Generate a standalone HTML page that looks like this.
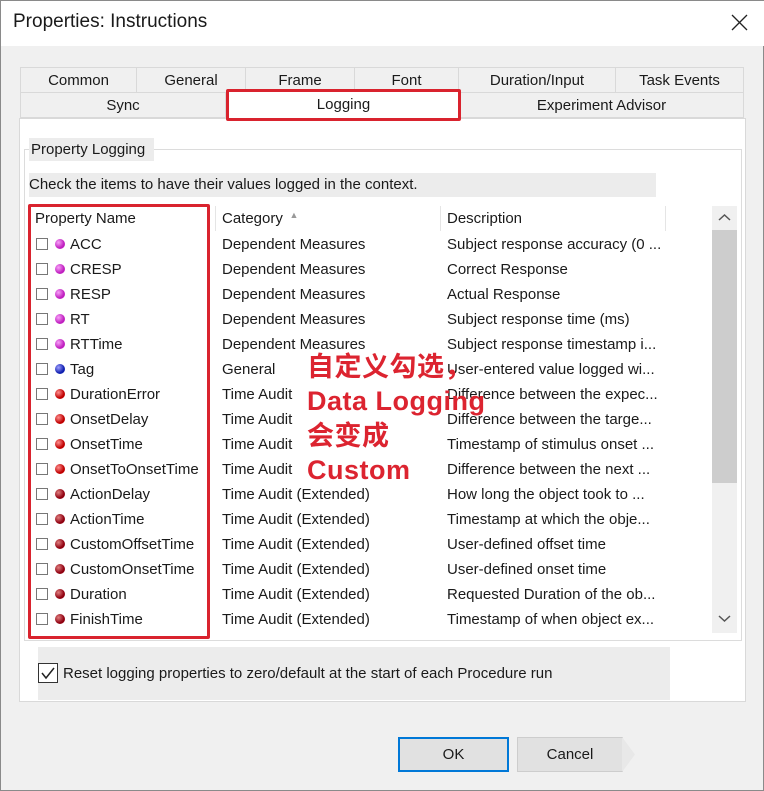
<!DOCTYPE html>
<html><head><meta charset="utf-8"><style>
*{margin:0;padding:0;box-sizing:border-box}
body{width:764px;height:791px;background:#f0f0f0;font-family:"Liberation Sans","Noto Sans CJK SC",sans-serif;font-size:15px;color:#1a1a1a;position:relative;overflow:hidden;border:1px solid #8a8a8a}
.a{position:absolute;white-space:nowrap}
.tab{position:absolute;background:#f0f0f0;border:1px solid #d9d9d9;text-align:center;line-height:25px;font-size:15px}
.row{position:absolute;left:29px;width:680px;height:25px;line-height:25px}
.cb{position:absolute;left:6px;top:6px;width:12px;height:12px;border:1px solid #777;background:#fff}
.dot{position:absolute;left:25px;top:7px;width:10px;height:10px;border-radius:50%}
.n{position:absolute;left:40px}
.c{position:absolute;left:192px}
.d{position:absolute;left:417px}
.red{position:absolute;left:306px;color:#dc2430;font-weight:bold;font-size:27px;font-family:"Liberation Sans","Noto Sans CJK SC",sans-serif;line-height:34px;letter-spacing:0.5px}
</style></head><body>
<div class="a" style="left:0;top:0;width:764px;height:45px;background:#fff"></div>
<div class="a" style="left:12px;top:10px;font-size:19px">Properties: Instructions</div>
<svg class="a" style="left:730px;top:13px" width="17" height="17"><path d="M1 1 L16 16 M16 1 L1 16" stroke="#222" stroke-width="1.3"/></svg>

<div class="tab" style="left:19px;top:66px;width:117px;height:26px">Common</div>
<div class="tab" style="left:135px;top:66px;width:110px;height:26px">General</div>
<div class="tab" style="left:244px;top:66px;width:110px;height:26px">Frame</div>
<div class="tab" style="left:353px;top:66px;width:105px;height:26px">Font</div>
<div class="tab" style="left:457px;top:66px;width:158px;height:26px">Duration/Input</div>
<div class="tab" style="left:614px;top:66px;width:129px;height:26px">Task Events</div>
<div class="tab" style="left:19px;top:91px;width:206px;height:26px">Sync</div>
<div class="tab" style="left:458px;top:91px;width:285px;height:26px">Experiment Advisor</div>

<div class="a" style="left:18px;top:117px;width:727px;height:584px;background:#fff;border:1px solid #d9d9d9"></div>
<div class="a" style="left:225px;top:88px;width:235px;height:32px;background:#fff;border:3px solid #d9232e;border-radius:2px;text-align:center;line-height:25px">Logging</div>

<div class="a" style="left:23px;top:148px;width:718px;height:492px;border:1px solid #dcdcdc"></div>
<div class="a" style="left:28px;top:137px;width:125px;height:23px;background:#ececec;padding-left:2px;line-height:23px">Property Logging</div>
<div class="a" style="left:28px;top:172px;width:627px;height:24px;background:#ececec;line-height:24px">Check the items to have their values logged in the context.</div>

<div class="a" style="left:214px;top:205px;width:1px;height:25px;background:#e5e5e5"></div>
<div class="a" style="left:439px;top:205px;width:1px;height:25px;background:#e5e5e5"></div>
<div class="a" style="left:664px;top:205px;width:1px;height:25px;background:#e5e5e5"></div>
<div class="a" style="left:34px;top:209px">Property Name</div>
<div class="a" style="left:221px;top:209px">Category <span style="font-size:9px;color:#999;vertical-align:5px">&nbsp;▲</span></div>
<div class="a" style="left:446px;top:209px">Description</div>

<div class="a" style="left:711px;top:205px;width:25px;height:427px;background:#f0f0f0"></div>
<div class="a" style="left:711px;top:229px;width:25px;height:253px;background:#cdcdcd"></div>
<svg class="a" style="left:717px;top:212px" width="13" height="9"><path d="M1 7 L6.5 2 L12 7" fill="none" stroke="#555" stroke-width="1.5"/></svg>
<svg class="a" style="left:717px;top:613px" width="13" height="9"><path d="M1 2 L6.5 7 L12 2" fill="none" stroke="#555" stroke-width="1.5"/></svg>

<div class="row" style="top:231px"><div class="cb"></div><div class="dot" style="background:radial-gradient(circle at 35% 35%,#f8a0f8,#c020c0 60%)"></div><div class="n">ACC</div><div class="c">Dependent Measures</div><div class="d">Subject response accuracy (0 ...</div></div>
<div class="row" style="top:256px"><div class="cb"></div><div class="dot" style="background:radial-gradient(circle at 35% 35%,#f8a0f8,#c020c0 60%)"></div><div class="n">CRESP</div><div class="c">Dependent Measures</div><div class="d">Correct Response</div></div>
<div class="row" style="top:281px"><div class="cb"></div><div class="dot" style="background:radial-gradient(circle at 35% 35%,#f8a0f8,#c020c0 60%)"></div><div class="n">RESP</div><div class="c">Dependent Measures</div><div class="d">Actual Response</div></div>
<div class="row" style="top:306px"><div class="cb"></div><div class="dot" style="background:radial-gradient(circle at 35% 35%,#f8a0f8,#c020c0 60%)"></div><div class="n">RT</div><div class="c">Dependent Measures</div><div class="d">Subject response time (ms)</div></div>
<div class="row" style="top:331px"><div class="cb"></div><div class="dot" style="background:radial-gradient(circle at 35% 35%,#f8a0f8,#c020c0 60%)"></div><div class="n">RTTime</div><div class="c">Dependent Measures</div><div class="d">Subject response timestamp i...</div></div>
<div class="row" style="top:356px"><div class="cb"></div><div class="dot" style="background:radial-gradient(circle at 35% 35%,#a0a0ff,#1020b0 60%)"></div><div class="n">Tag</div><div class="c">General</div><div class="d">User-entered value logged wi...</div></div>
<div class="row" style="top:381px"><div class="cb"></div><div class="dot" style="background:radial-gradient(circle at 35% 35%,#ff9090,#c00000 60%)"></div><div class="n">DurationError</div><div class="c">Time Audit</div><div class="d">Difference between the expec...</div></div>
<div class="row" style="top:406px"><div class="cb"></div><div class="dot" style="background:radial-gradient(circle at 35% 35%,#ff9090,#c00000 60%)"></div><div class="n">OnsetDelay</div><div class="c">Time Audit</div><div class="d">Difference between the targe...</div></div>
<div class="row" style="top:431px"><div class="cb"></div><div class="dot" style="background:radial-gradient(circle at 35% 35%,#ff9090,#c00000 60%)"></div><div class="n">OnsetTime</div><div class="c">Time Audit</div><div class="d">Timestamp of stimulus onset ...</div></div>
<div class="row" style="top:456px"><div class="cb"></div><div class="dot" style="background:radial-gradient(circle at 35% 35%,#ff9090,#c00000 60%)"></div><div class="n">OnsetToOnsetTime</div><div class="c">Time Audit</div><div class="d">Difference between the next ...</div></div>
<div class="row" style="top:481px"><div class="cb"></div><div class="dot" style="background:radial-gradient(circle at 35% 35%,#e08080,#900010 60%)"></div><div class="n">ActionDelay</div><div class="c">Time Audit (Extended)</div><div class="d">How long the object took to ...</div></div>
<div class="row" style="top:506px"><div class="cb"></div><div class="dot" style="background:radial-gradient(circle at 35% 35%,#e08080,#900010 60%)"></div><div class="n">ActionTime</div><div class="c">Time Audit (Extended)</div><div class="d">Timestamp at which the obje...</div></div>
<div class="row" style="top:531px"><div class="cb"></div><div class="dot" style="background:radial-gradient(circle at 35% 35%,#e08080,#900010 60%)"></div><div class="n">CustomOffsetTime</div><div class="c">Time Audit (Extended)</div><div class="d">User-defined offset time</div></div>
<div class="row" style="top:556px"><div class="cb"></div><div class="dot" style="background:radial-gradient(circle at 35% 35%,#e08080,#900010 60%)"></div><div class="n">CustomOnsetTime</div><div class="c">Time Audit (Extended)</div><div class="d">User-defined onset time</div></div>
<div class="row" style="top:581px"><div class="cb"></div><div class="dot" style="background:radial-gradient(circle at 35% 35%,#e08080,#900010 60%)"></div><div class="n">Duration</div><div class="c">Time Audit (Extended)</div><div class="d">Requested Duration of the ob...</div></div>
<div class="row" style="top:606px"><div class="cb"></div><div class="dot" style="background:radial-gradient(circle at 35% 35%,#e08080,#900010 60%)"></div><div class="n">FinishTime</div><div class="c">Time Audit (Extended)</div><div class="d">Timestamp of when object ex...</div></div>

<div class="a" style="left:27px;top:203px;width:182px;height:435px;border:3px solid #d9232e;border-radius:2px"></div>

<div class="red" style="top:349px">自定义勾选，</div>
<div class="red" style="top:383px">Data Logging</div>
<div class="red" style="top:418px">会变成</div>
<div class="red" style="top:452px">Custom</div>

<div class="a" style="left:37px;top:646px;width:632px;height:53px;background:#ececec"></div>
<div class="a" style="left:37px;top:662px;width:20px;height:20px;border:1px solid #333;background:#fff"></div>
<svg class="a" style="left:39px;top:664px" width="16" height="16"><path d="M2 8 L6 13 L14 3" fill="none" stroke="#222" stroke-width="1.5"/></svg>
<div class="a" style="left:62px;top:664px">Reset logging properties to zero/default at the start of each Procedure run</div>

<div class="a" style="left:397px;top:736px;width:111px;height:35px;border:2px solid #0078d7;background:#e1e1e1;text-align:center;line-height:31px">OK</div>
<div class="a" style="left:516px;top:736px;width:106px;height:35px;border:1px solid #cdcdcd;background:#e1e1e1;text-align:center;line-height:33px">Cancel</div>
<svg class="a" style="left:621px;top:736px" width="14" height="35"><path d="M0 0 L13 17.5 L0 35Z" fill="#e8e8e8"/></svg>
</body></html>
